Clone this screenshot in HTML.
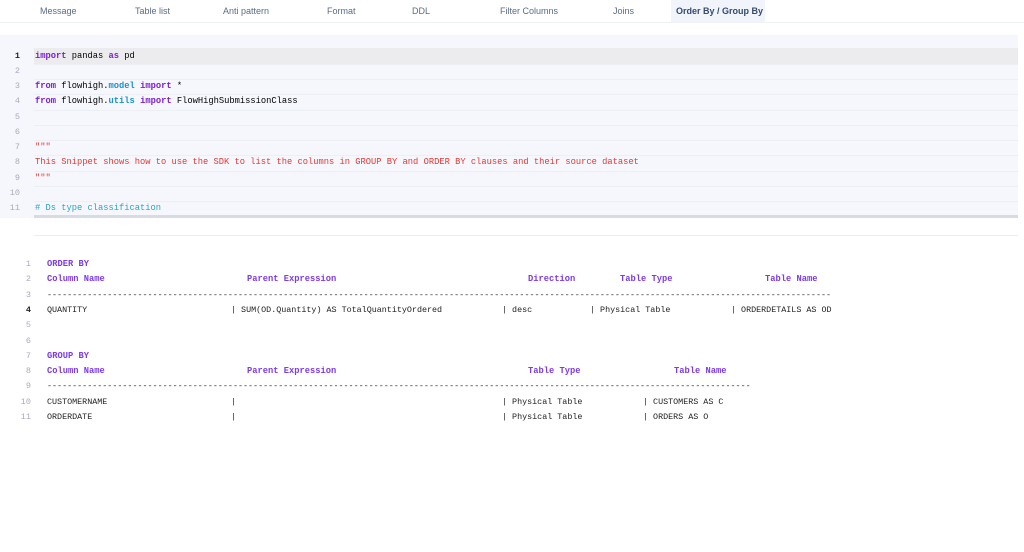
<!DOCTYPE html>
<html><head><meta charset="utf-8"><style>
*{margin:0;padding:0;box-sizing:border-box}
body{width:1024px;height:552px;background:#fff;position:relative;overflow:hidden;font-family:"Liberation Sans",sans-serif}
.tab{position:absolute;top:6px;font-size:9px;color:#5b6b86}
.act{position:absolute;left:671px;top:0;width:94px;height:22px;background:#f1f5fb}
.m{position:absolute;font-family:"Liberation Mono",monospace;font-size:8.75px;white-space:pre;line-height:11px}
.n{position:absolute;font-family:"Liberation Mono",monospace;font-size:8.5px;color:#aab;text-align:right;width:12px;line-height:11px}
.k{color:#7c1fd6;font-weight:bold}
.b{color:#1f8fd0;font-weight:bold}
.h{color:#7c3aed;font-weight:bold}
.o{font-size:8.4px;color:#222}
.sep{position:absolute;left:34px;height:1px;background:#eceff4;width:984px}
</style></head><body>
<div class="act"></div>
<div class="tab" style="left:40px">Message</div>
<div class="tab" style="left:135px">Table list</div>
<div class="tab" style="left:223px">Anti pattern</div>
<div class="tab" style="left:327px">Format</div>
<div class="tab" style="left:412px">DDL</div>
<div class="tab" style="left:500px">Filter Columns</div>
<div class="tab" style="left:613px">Joins</div>
<div class="tab" style="left:676px;color:#334a6e;font-weight:bold">Order By / Group By</div>
<div style="position:absolute;left:0;top:22px;width:1024px;height:1px;background:#eef1f5"></div>
<div style="position:absolute;left:0;top:35px;width:1018px;height:183px;background:#f5f7fc"></div>
<div style="position:absolute;left:34px;top:48px;width:984px;height:16px;background:#ececef"></div>
<div style="position:absolute;left:34px;top:215px;width:984px;height:3px;background:#d7dbe2"></div>
<div style="position:absolute;left:34px;top:235px;width:984px;height:1px;background:#eceef2"></div>
<div class="sep" style="top:64px"></div><div class="sep" style="top:79px"></div><div class="sep" style="top:94px"></div><div class="sep" style="top:110px"></div><div class="sep" style="top:125px"></div><div class="sep" style="top:140px"></div><div class="sep" style="top:155px"></div><div class="sep" style="top:171px"></div><div class="sep" style="top:186px"></div><div class="sep" style="top:201px"></div>

<div class="n" style="left:8px;top:51px;color:#222;font-weight:bold">1</div>
<div class="n" style="left:8px;top:66px">2</div>
<div class="n" style="left:8px;top:81px">3</div>
<div class="n" style="left:8px;top:96px">4</div>
<div class="n" style="left:8px;top:112px">5</div>
<div class="n" style="left:8px;top:127px">6</div>
<div class="n" style="left:8px;top:142px">7</div>
<div class="n" style="left:8px;top:157px">8</div>
<div class="n" style="left:8px;top:173px">9</div>
<div class="n" style="left:8px;top:188px">10</div>
<div class="n" style="left:8px;top:203px">11</div>
<div class="m" style="left:35px;top:51px"><span class="k">import</span> pandas <span class="k">as</span> pd</div>
<div class="m" style="left:35px;top:81px"><span class="k">from</span> flowhigh.<span class="b">model</span> <span class="k">import</span> *</div>
<div class="m" style="left:35px;top:96px"><span class="k">from</span> flowhigh.<span class="b">utils</span> <span class="k">import</span> FlowHighSubmissionClass</div>
<div class="m" style="left:35px;top:142px;color:#e53935">"""</div>
<div class="m" style="left:35px;top:157px;color:#e53935">This Snippet shows how to use the SDK to list the columns in GROUP BY and ORDER BY clauses and their source dataset</div>
<div class="m" style="left:35px;top:173px;color:#e53935">"""</div>
<div class="m" style="left:35px;top:203px;color:#26a6c4"># Ds type classification</div>

<div class="n" style="left:19px;top:259px">1</div>
<div class="n" style="left:19px;top:274px">2</div>
<div class="n" style="left:19px;top:290px">3</div>
<div class="n" style="left:19px;top:305px;color:#222;font-weight:bold">4</div>
<div class="n" style="left:19px;top:320px">5</div>
<div class="n" style="left:19px;top:336px">6</div>
<div class="n" style="left:19px;top:351px">7</div>
<div class="n" style="left:19px;top:366px">8</div>
<div class="n" style="left:19px;top:381px">9</div>
<div class="n" style="left:19px;top:397px">10</div>
<div class="n" style="left:19px;top:412px">11</div>

<div class="m h" style="left:47px;top:259px">ORDER BY</div>
<div class="m h" style="left:47px;top:274px">Column Name</div>
<div class="m h" style="left:247px;top:274px">Parent Expression</div>
<div class="m h" style="left:528px;top:274px">Direction</div>
<div class="m h" style="left:620px;top:274px">Table Type</div>
<div class="m h" style="left:765px;top:274px">Table Name</div>
<div class="m o" style="left:47px;top:290px;width:783px;overflow:hidden">---------------------------------------------------------------------------------------------------------------------------------------------------------------</div>
<div class="m o" style="left:47px;top:305px">QUANTITY</div>
<div class="m o" style="left:231px;top:305px">| SUM(OD.Quantity) AS TotalQuantityOrdered</div>
<div class="m o" style="left:502px;top:305px">| desc</div>
<div class="m o" style="left:590px;top:305px">| Physical Table</div>
<div class="m o" style="left:731px;top:305px">| ORDERDETAILS AS OD</div>

<div class="m h" style="left:47px;top:351px">GROUP BY</div>
<div class="m h" style="left:47px;top:366px">Column Name</div>
<div class="m h" style="left:247px;top:366px">Parent Expression</div>
<div class="m h" style="left:528px;top:366px">Table Type</div>
<div class="m h" style="left:674px;top:366px">Table Name</div>
<div class="m o" style="left:47px;top:381px;width:705px;overflow:hidden">---------------------------------------------------------------------------------------------------------------------------------------------------------------</div>
<div class="m o" style="left:47px;top:397px">CUSTOMERNAME</div>
<div class="m o" style="left:231px;top:397px">|</div>
<div class="m o" style="left:502px;top:397px">| Physical Table</div>
<div class="m o" style="left:643px;top:397px">| CUSTOMERS AS C</div>
<div class="m o" style="left:47px;top:412px">ORDERDATE</div>
<div class="m o" style="left:231px;top:412px">|</div>
<div class="m o" style="left:502px;top:412px">| Physical Table</div>
<div class="m o" style="left:643px;top:412px">| ORDERS AS O</div>
</body></html>
